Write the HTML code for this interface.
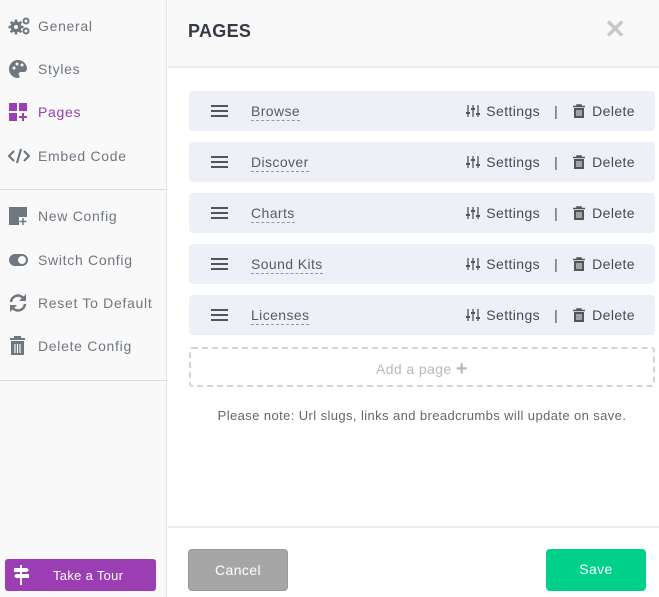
<!DOCTYPE html>
<html><head><style>
*{margin:0;padding:0;box-sizing:border-box}
body{width:659px;height:597px;font-family:"Liberation Sans",sans-serif;background:#fff;position:relative;overflow:hidden}
.side{position:absolute;left:0;top:0;width:167px;height:597px;background:#f9f9f9;border-right:1px solid #e6e6e6}
.it{position:absolute;left:8px;height:20px;display:flex;align-items:center;font-size:14px;color:#6f7780;letter-spacing:.7px}
.it svg{width:22px;height:20px;margin-right:8px}
.hr{position:absolute;left:0;width:167px;border-top:1px solid #dcdcdc}
.tour{position:absolute;left:5px;top:559px;width:151px;height:32px;background:#9b3db3;border-radius:3px;color:#fff;font-size:13px;display:flex;align-items:center;letter-spacing:.3px}
.hdr{position:absolute;left:168px;top:0;right:0;height:68px;background:#f9f9f9;border-bottom:2px solid #ececec}
.hdr h1{position:absolute;left:20px;top:21px;font-size:18px;color:#333a44;font-weight:bold;letter-spacing:.3px}
.x{position:absolute;right:33px;top:14px;font-size:26px;color:#c8c8c8;font-weight:bold}
.row{position:absolute;left:189px;width:466px;height:40px;background:#edf0f7;border-radius:4px;font-size:14px;color:#444b55;letter-spacing:.4px}
.row .h{position:absolute;left:22px;top:14px;width:17px;height:12px;border-top:2.5px solid #555;border-bottom:2.5px solid #555}
.row .h:after{content:"";position:absolute;left:0;right:0;top:2.5px;border-top:2.5px solid #555}
.row .n{position:absolute;left:62px;top:12px;border-bottom:1px dashed #999;line-height:16px;padding-bottom:1px;color:#555c66}
.row .r{position:absolute;right:20px;top:12px;display:flex;align-items:center;gap:6px}
.add{position:absolute;left:189px;top:347px;width:466px;height:40px;border:2px dashed #d4d4d4;border-radius:3px;color:#b9b9b9;font-size:14px;text-align:center;line-height:40px;letter-spacing:.4px}
.note{position:absolute;left:189px;width:466px;top:408px;text-align:center;font-size:13px;color:#666;letter-spacing:.4px}
.ftr{position:absolute;left:168px;top:526px;right:0;border-top:2px solid #ececec}
.btn{position:absolute;top:549px;width:100px;height:42px;border-radius:4px;color:#fff;font-size:14px;text-align:center;line-height:40px;letter-spacing:.4px}
</style></head><body>
<div class="side">
<div class="it" style="top:16px"><svg viewBox="0 0 22 20"><circle cx="8" cy="11" r="5.5" fill="#6f7780"/><path d="M8 3.5v15M0.5 11h15M2.7 5.7l10.6 10.6M13.3 5.7L2.7 16.3" stroke="#6f7780" stroke-width="2.5"/><circle cx="8" cy="11" r="2" fill="#f9f9f9"/><circle cx="18" cy="5" r="2.5" fill="none" stroke="#6f7780" stroke-width="2"/><circle cx="18" cy="15" r="2.5" fill="none" stroke="#6f7780" stroke-width="2"/></svg>General</div>
<div class="it" style="top:59px"><svg viewBox="0 0 22 20"><path d="M10 1a9 9 0 1 0 0 18c2 0 2-2 1-3s0-3 2-3h3a3 3 0 0 0 3-3C19 5 15 1 10 1z" fill="#6f7780"/><circle cx="6" cy="9" r="1.5" fill="#f9f9f9"/><circle cx="9" cy="5" r="1.5" fill="#f9f9f9"/><circle cx="14" cy="6" r="1.5" fill="#f9f9f9"/></svg>Styles</div>
<div class="it" style="top:102px;color:#9b3db3"><svg viewBox="0 0 22 20"><rect x="1" y="1" width="8" height="8" fill="#9b3db3"/><rect x="11" y="1" width="8" height="8" fill="#9b3db3"/><rect x="1" y="11" width="8" height="8" fill="#9b3db3"/><path d="M15 11v8M11 15h8" stroke="#9b3db3" stroke-width="2"/></svg>Pages</div>
<div class="it" style="top:146px"><svg viewBox="0 0 22 20"><path d="M6 5l-5 5 5 5M16 5l5 5-5 5M13 3l-4 14" stroke="#6f7780" stroke-width="2.2" fill="none"/></svg>Embed Code</div>
<div class="hr" style="top:189px"></div>
<div class="it" style="top:206px"><svg viewBox="0 0 22 20"><path d="M1 1h18v10h-8v8H1z" fill="#6f7780"/><path d="M15 12v7M11.5 15.5h7" stroke="#6f7780" stroke-width="1.5"/></svg>New Config</div>
<div class="it" style="top:250px"><svg viewBox="0 0 22 20"><rect x="1" y="4" width="19" height="12" rx="6" fill="#6f7780"/><circle cx="14" cy="10" r="4" fill="#f9f9f9"/></svg>Switch Config</div>
<div class="it" style="top:293px"><svg viewBox="0 0 22 20"><path d="M3 9a7 7 0 0 1 13-3M17 11a7 7 0 0 1-13 3" stroke="#6f7780" stroke-width="2.5" fill="none"/><path d="M18 1v7h-7zM2 19v-7h7z" fill="#6f7780"/></svg>Reset To Default</div>
<div class="it" style="top:336px"><svg viewBox="0 0 22 20"><path d="M2 3h15M7 3V1h5v2" stroke="#6f7780" stroke-width="2" fill="none"/><rect x="3" y="5" width="13" height="14" fill="#6f7780"/><path d="M7 8v9M9.5 8v9M12 8v9" stroke="#f9f9f9" stroke-width="1.2"/></svg>Delete Config</div>
<div class="hr" style="top:380px"></div>
<div class="tour"><svg width="20" height="22" viewBox="0 0 20 22" style="margin:0 21px 0 7px"><path d="M9 1v20" stroke="#fff" stroke-width="2"/><path d="M2 4h13l2 2-2 2H2zM4 10h13v4H4l-2-2z" fill="#fff"/></svg>Take a Tour</div>
</div>
<div class="hdr"><h1>PAGES</h1><div class="x">✕</div></div>
<div class="row" style="top:91px"><div class="h"></div><div class="n">Browse</div><div class="r"><svg width="14" height="14" viewBox="0 0 14 14"><path d="M2 1v12M7 1v12M12 1v12" stroke="#555" stroke-width="1.3"/><rect x="0" y="8" width="4" height="2" fill="#555"/><rect x="5" y="4" width="4" height="2" fill="#555"/><rect x="10" y="9" width="4" height="2" fill="#555"/></svg>Settings<span style="margin:0 8px">|</span><svg width="14" height="14" viewBox="0 0 14 14"><path d="M1 2.5h12M5 2V1h4v1" stroke="#555" stroke-width="1.5" fill="none"/><rect x="2" y="4" width="10" height="10" fill="#555"/><path d="M5 6v6M7 6v6M9 6v6" stroke="#edf0f7"/></svg>Delete</div></div>
<div class="row" style="top:142px"><div class="h"></div><div class="n">Discover</div><div class="r"><svg width="14" height="14" viewBox="0 0 14 14"><path d="M2 1v12M7 1v12M12 1v12" stroke="#555" stroke-width="1.3"/><rect x="0" y="8" width="4" height="2" fill="#555"/><rect x="5" y="4" width="4" height="2" fill="#555"/><rect x="10" y="9" width="4" height="2" fill="#555"/></svg>Settings<span style="margin:0 8px">|</span><svg width="14" height="14" viewBox="0 0 14 14"><path d="M1 2.5h12M5 2V1h4v1" stroke="#555" stroke-width="1.5" fill="none"/><rect x="2" y="4" width="10" height="10" fill="#555"/><path d="M5 6v6M7 6v6M9 6v6" stroke="#edf0f7"/></svg>Delete</div></div>
<div class="row" style="top:193px"><div class="h"></div><div class="n">Charts</div><div class="r"><svg width="14" height="14" viewBox="0 0 14 14"><path d="M2 1v12M7 1v12M12 1v12" stroke="#555" stroke-width="1.3"/><rect x="0" y="8" width="4" height="2" fill="#555"/><rect x="5" y="4" width="4" height="2" fill="#555"/><rect x="10" y="9" width="4" height="2" fill="#555"/></svg>Settings<span style="margin:0 8px">|</span><svg width="14" height="14" viewBox="0 0 14 14"><path d="M1 2.5h12M5 2V1h4v1" stroke="#555" stroke-width="1.5" fill="none"/><rect x="2" y="4" width="10" height="10" fill="#555"/><path d="M5 6v6M7 6v6M9 6v6" stroke="#edf0f7"/></svg>Delete</div></div>
<div class="row" style="top:244px"><div class="h"></div><div class="n">Sound Kits</div><div class="r"><svg width="14" height="14" viewBox="0 0 14 14"><path d="M2 1v12M7 1v12M12 1v12" stroke="#555" stroke-width="1.3"/><rect x="0" y="8" width="4" height="2" fill="#555"/><rect x="5" y="4" width="4" height="2" fill="#555"/><rect x="10" y="9" width="4" height="2" fill="#555"/></svg>Settings<span style="margin:0 8px">|</span><svg width="14" height="14" viewBox="0 0 14 14"><path d="M1 2.5h12M5 2V1h4v1" stroke="#555" stroke-width="1.5" fill="none"/><rect x="2" y="4" width="10" height="10" fill="#555"/><path d="M5 6v6M7 6v6M9 6v6" stroke="#edf0f7"/></svg>Delete</div></div>
<div class="row" style="top:295px"><div class="h"></div><div class="n">Licenses</div><div class="r"><svg width="14" height="14" viewBox="0 0 14 14"><path d="M2 1v12M7 1v12M12 1v12" stroke="#555" stroke-width="1.3"/><rect x="0" y="8" width="4" height="2" fill="#555"/><rect x="5" y="4" width="4" height="2" fill="#555"/><rect x="10" y="9" width="4" height="2" fill="#555"/></svg>Settings<span style="margin:0 8px">|</span><svg width="14" height="14" viewBox="0 0 14 14"><path d="M1 2.5h12M5 2V1h4v1" stroke="#555" stroke-width="1.5" fill="none"/><rect x="2" y="4" width="10" height="10" fill="#555"/><path d="M5 6v6M7 6v6M9 6v6" stroke="#edf0f7"/></svg>Delete</div></div>
<div class="add">Add a page <span style="font-size:20px;font-weight:bold;vertical-align:-1px">+</span></div>
<div class="note">Please note: Url slugs, links and breadcrumbs will update on save.</div>
<div class="ftr"></div>
<div class="btn" style="left:188px;background:#a6a6a6;border:1px solid #999">Cancel</div>
<div class="btn" style="left:546px;background:#00d08a">Save</div>
</body></html>
